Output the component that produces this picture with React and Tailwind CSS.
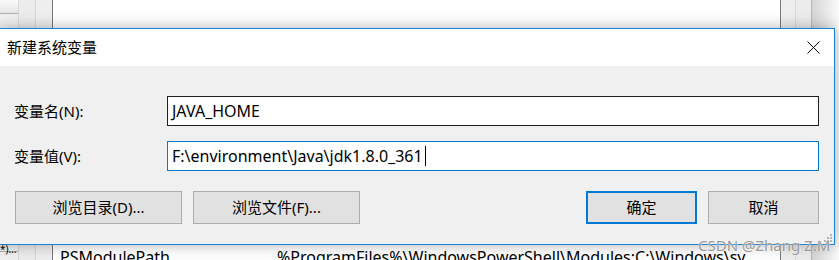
import { useState } from 'react';

const UI_FONT = { fontFamily: '"Noto Sans", "Noto Sans CJK SC", sans-serif' };

function WinButton({ children, primary, className = '' }) {
  return (
    <button
      className={`h-[33px] flex items-center justify-center bg-[#e1e1e1] text-[15px] text-black ${
        primary ? 'border-2 border-[#0078d7]' : 'border border-[#adadad]'
      } ${className}`}
    >
      {children}
    </button>
  );
}

function Field({ label, value, focused }) {
  return (
    <div className="flex items-center h-[30px]">
      <label className="w-[167px] pl-[14px] text-[15px] text-black">{label}</label>
      <div
        className={`flex-1 h-[30px] flex items-center pl-[4px] bg-white border ${
          focused ? 'border-[#0078d7]' : 'border-[#1e1e1e]'
        }`}
      >
        <span className="text-[16px] text-black leading-none">{value}</span>
        {focused && <span className="ml-[2px] w-px h-[20px] bg-black" />}
      </div>
    </div>
  );
}

export default function App() {
  const [name] = useState('JAVA_HOME');
  const [value] = useState('F:\\environment\\Java\\jdk1.8.0_361');

  return (
    <div className="relative w-[839px] h-[260px] overflow-hidden bg-white" style={UI_FONT}>
      {/* background window (system variables list) */}
      <div className="flex h-full">
        <div className="w-[19px] flex flex-col bg-[#f0f0f0] border-r border-[#d9d9d9]">
          <div className="h-[14px] border-b border-[#adadad] bg-gradient-to-b from-[#fafafa] to-[#e6e6e6]" />
          <div className="flex-1" />
          <div className="h-[8px] mb-[8px] border-b border-[#adadad] text-[10px] leading-none text-black">*)…</div>
        </div>
        <div className="w-[17px] bg-[#ececec] border-r border-[#d6d6d6]" />
        <div className="w-[17px] bg-[#eeeeee] border-r border-[#7a7a7a]" />
        <div className="flex-1 flex flex-col justify-end">
          <div className="flex h-[14px] text-[16px] leading-[22px] text-black overflow-visible">
            <span className="pl-[7px] w-[224px]">PSModulePath</span>
            <span className="whitespace-nowrap">%ProgramFiles%\WindowsPowerShell\Modules;C:\Windows\sy</span>
          </div>
        </div>
        <div className="w-[16px] bg-[#eeeeee] border-l border-[#7a7a7a] border-r border-r-[#d6d6d6]" />
        <div className="w-[16px] bg-[#ececec] border-r border-[#b8b8b8]" />
        <div className="w-[27px] bg-gradient-to-r from-[#d4d4d4] to-[#fbfbfb]" />
      </div>

      {/* 新建系统变量 dialog */}
      <div className="absolute left-[-1px] top-[28px] w-[836px] h-[217px] flex flex-col border border-[#1883d7] bg-[#f0f0f0] shadow-[0_0_14px_rgba(0,0,0,0.3)]">
        <div className="h-[37px] bg-white flex items-center justify-between pl-[7px] pr-[14px]">
          <span className="text-[15px] text-black">新建系统变量</span>
          <svg width="13" height="13" viewBox="0 0 13 13" className="text-black">
            <path d="M0.5 0.5 L12.5 12.5 M12.5 0.5 L0.5 12.5" stroke="currentColor" strokeWidth="1" />
          </svg>
        </div>
        <div className="relative flex-1 flex flex-col pt-[30px] pr-[15px]">
          <div className="flex flex-col gap-[15px]">
            <Field label="变量名(N):" value={name} />
            <Field label="变量值(V):" value={value} focused />
          </div>
          <div className="flex mt-[20px] pl-[15px]">
            <WinButton className="w-[167px]">浏览目录(D)...</WinButton>
            <WinButton className="w-[167px] ml-[11px]">浏览文件(F)...</WinButton>
            <div className="flex-1" />
            <WinButton primary className="w-[111px]">确定</WinButton>
            <WinButton className="w-[111px] ml-[11px]">取消</WinButton>
          </div>
          <div className="absolute right-[2px] bottom-[2px] grid grid-cols-3 gap-[1px]">
            {[0, 0, 1, 0, 1, 1, 1, 1, 1].map((on, i) => (
              <span key={i} className={`w-[2px] h-[2px] ${on ? 'bg-[#b5b5b5]' : 'bg-transparent'}`} />
            ))}
          </div>
        </div>
      </div>

      {/* watermark */}
      <div
        className="absolute left-[698px] top-[234px] text-[15px] text-[#9a9a9a] whitespace-nowrap"
        style={{ textShadow: '0 0 2px #fff' }}
      >
        CSDN @Zhang Z.M
      </div>
    </div>
  );
}
